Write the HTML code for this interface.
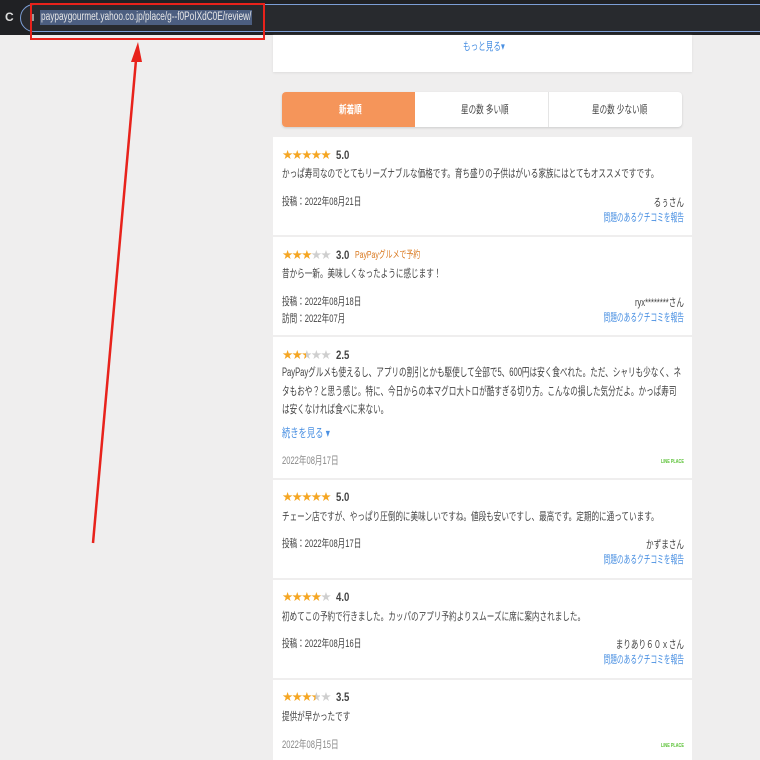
<!DOCTYPE html>
<html><head><meta charset="utf-8"><style>
*{margin:0;padding:0;box-sizing:border-box}
body{width:760px;height:760px;overflow:hidden;background:#efeeee;position:relative;font-family:"Liberation Sans","Noto Sans CJK JP",sans-serif;color:#333}
.a{position:absolute}
.t{position:absolute;white-space:nowrap;font-size:11px;transform:scaleX(.69);transform-origin:0 50%;line-height:14px;color:#444}
.r{transform-origin:100% 50%;text-align:right}
.t.rb{transform:scaleX(.61)}
.card{position:absolute;left:273px;width:419px;background:#fff}
.blue{color:#4a90e2}
.st{position:absolute;font-family:"DejaVu Sans",sans-serif;font-size:12.5px;line-height:12px;white-space:nowrap}
.st i{font-style:normal;display:inline-block;width:9.6px;color:#f5a623}
.st i.g{color:#cfcfcf}
.st i.h{background:linear-gradient(90deg,#f5a623 50%,#cfcfcf 50%);-webkit-background-clip:text;background-clip:text;color:transparent}
.sc{position:absolute;font-size:12px;font-weight:bold;color:#444;transform:scaleX(.8);transform-origin:0 50%;line-height:12px}
.lp{position:absolute;font-size:5.5px;font-weight:bold;color:#5bc236;left:661px;transform:scaleX(.7);transform-origin:0 50%}
</style></head><body>
<div class="a" style="left:0;top:0;width:760px;height:35px;background:#202124"></div>
<div class="a" style="left:20px;top:4px;width:760px;height:28px;border:1.5px solid #7c9ed6;border-radius:14px;background:#282a2e"></div>
<div class="a" style="left:5px;top:10px;color:#ddd;font-size:12px;font-weight:bold">C</div>
<div class="a" style="left:31px;top:14px;width:3px;height:7px;background:#999"></div>
<div class="a" style="left:40px;top:10px;width:212px;height:15px;background:#4c5e80"></div>
<div class="t" style="left:41px;top:10px;color:#e8e8e8;font-size:11.5px;transform:scaleX(.72)">paypaygourmet.yahoo.co.jp/place/g--f0PoIXdC0E/review/</div>
<div class="a" style="left:30px;top:3px;width:235px;height:37px;border:2px solid #e8221b"></div>

<div class="card" style="top:35px;height:37px;box-shadow:0 1px 2px #ddd"></div>
<div class="t blue" style="left:463px;top:40px">もっと見る▾</div>

<div class="a" style="left:282px;top:92px;width:400px;height:35px;background:#fff;border-radius:4px;box-shadow:0 1px 2px #ccc"></div>
<div class="a" style="left:282px;top:92px;width:133px;height:35px;background:#f5955a;border-radius:4px 0 0 4px"></div>
<div class="a" style="left:548px;top:92px;width:1px;height:35px;background:#e5e5e5"></div>
<div class="t" style="left:339px;top:103px;color:#fff;font-weight:bold">新着順</div>
<div class="t" style="left:461px;top:103px">星の数 多い順</div>
<div class="t" style="left:592px;top:103px">星の数 少ない順</div>

<div class="card" style="top:137px;height:98px"></div>
<div class="card" style="top:237px;height:98px"></div>
<div class="card" style="top:337px;height:141px"></div>
<div class="card" style="top:480px;height:98px"></div>
<div class="card" style="top:580px;height:98px"></div>
<div class="card" style="top:680px;height:80px"></div>

<div class="st" style="left:282px;top:149px"><i>★</i><i>★</i><i>★</i><i>★</i><i>★</i></div>
<div class="sc" style="left:336px;top:149px">5.0</div>
<div class="t" style="left:282px;top:167px">かっぱ寿司なのでとてもリーズナブルな価格です。育ち盛りの子供はがいる家族にはとてもオススメですです。</div>
<div class="t" style="left:282px;top:195px">投稿：2022年08月21日</div>
<div class="t r" style="right:76px;top:196px">るぅさん</div>
<div class="t r rb blue" style="right:76px;top:211px">問題のあるクチコミを報告</div>

<div class="st" style="left:282px;top:249px"><i>★</i><i>★</i><i>★</i><i class="g">★</i><i class="g">★</i></div>
<div class="sc" style="left:336px;top:249px">3.0</div>
<div class="t" style="left:355px;top:249px;color:#d9771c;font-size:10px">PayPayグルメで予約</div>
<div class="t" style="left:282px;top:267px">昔から一新。美味しくなったように感じます！</div>
<div class="t" style="left:282px;top:295px">投稿：2022年08月18日</div>
<div class="t" style="left:282px;top:312px">訪問：2022年07月</div>
<div class="t r" style="right:76px;top:296px">ryx********さん</div>
<div class="t r rb blue" style="right:76px;top:311px">問題のあるクチコミを報告</div>

<div class="st" style="left:282px;top:349px"><i>★</i><i>★</i><i class="h">★</i><i class="g">★</i><i class="g">★</i></div>
<div class="sc" style="left:336px;top:349px">2.5</div>
<div class="t" style="left:282px;top:364px;line-height:18.5px;font-size:11.5px;transform:scaleX(.66)">PayPayグルメも使えるし、アプリの割引とかも駆使して全部で5、600円は安く食べれた。ただ、シャリも少なく、ネ<br>タもおや？と思う感じ。特に、今日からの本マグロ大トロが酷すぎる切り方。こんなの損した気分だよ。かっぱ寿司<br>は安くなければ食べに来ない。</div>
<div class="t blue" style="left:282px;top:426px;font-size:12px">続きを見る ▾</div>
<div class="t" style="left:282px;top:454px;color:#888">2022年08月17日</div>
<div class="lp" style="top:459px">LINE PLACE</div>

<div class="st" style="left:282px;top:491px"><i>★</i><i>★</i><i>★</i><i>★</i><i>★</i></div>
<div class="sc" style="left:336px;top:491px">5.0</div>
<div class="t" style="left:282px;top:510px">チェーン店ですが、やっぱり圧倒的に美味しいですね。値段も安いですし、最高です。定期的に通っています。</div>
<div class="t" style="left:282px;top:537px">投稿：2022年08月17日</div>
<div class="t r" style="right:76px;top:538px">かずまさん</div>
<div class="t r rb blue" style="right:76px;top:553px">問題のあるクチコミを報告</div>

<div class="st" style="left:282px;top:591px"><i>★</i><i>★</i><i>★</i><i>★</i><i class="g">★</i></div>
<div class="sc" style="left:336px;top:591px">4.0</div>
<div class="t" style="left:282px;top:610px">初めてこの予約で行きました。カッパのアプリ予約よりスムーズに席に案内されました。</div>
<div class="t" style="left:282px;top:637px">投稿：2022年08月16日</div>
<div class="t r" style="right:76px;top:638px">まりあり６０ｘさん</div>
<div class="t r rb blue" style="right:76px;top:653px">問題のあるクチコミを報告</div>

<div class="st" style="left:282px;top:691px"><i>★</i><i>★</i><i>★</i><i class="h">★</i><i class="g">★</i></div>
<div class="sc" style="left:336px;top:691px">3.5</div>
<div class="t" style="left:282px;top:710px">提供が早かったです</div>
<div class="t" style="left:282px;top:738px;color:#888">2022年08月15日</div>
<div class="lp" style="top:743px">LINE PLACE</div>

<svg class="a" style="left:0;top:0" width="760" height="760">
<line x1="93" y1="543" x2="136" y2="60" stroke="#e8221b" stroke-width="2.5"/>
<polygon points="138,42 131,62 142,62" fill="#e8221b"/>
</svg>
</body></html>
